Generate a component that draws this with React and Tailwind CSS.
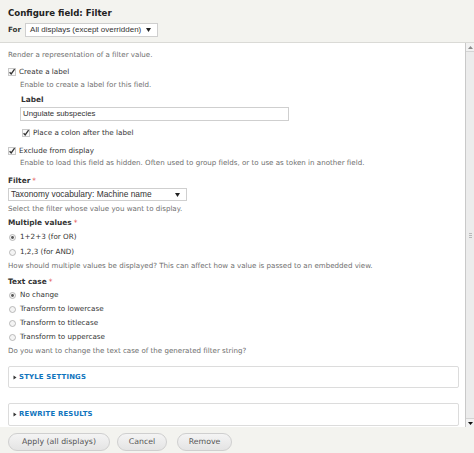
import React from "react";

const sans = { fontFamily: '"DejaVu Sans", Verdana, sans-serif' };
const arial = { fontFamily: '"Liberation Sans", Arial, sans-serif' };

function Check() {
  return (
    <svg width="8" height="8" viewBox="0 0 8 8" className="shrink-0">
      <rect x="0.5" y="0.5" width="7" height="7" fill="#fafafa" stroke="#c8c8c8" />
      <path d="M1.6 4.2 L3.2 6 L6.6 1.2" fill="none" stroke="#333" strokeWidth="1.3" />
    </svg>
  );
}

function Radio({ on }) {
  return (
    <svg width="7" height="7" viewBox="0 0 7 7" className="shrink-0">
      <circle cx="3.5" cy="3.5" r="3" fill="#f4f4f4" stroke="#aaa" strokeWidth="0.8" />
      {on && <circle cx="3.5" cy="3.5" r="1.4" fill="#555" />}
    </svg>
  );
}

function Caret() {
  return (
    <svg width="5" height="4" viewBox="0 0 5 4" className="shrink-0">
      <path d="M0 0 H5 L2.5 4 Z" fill="#222" />
    </svg>
  );
}

function Req() {
  return <span className="text-[#e0403a] font-normal ml-[2px]">*</span>;
}

function Desc({ children, className = "" }) {
  return (
    <div className={"h-[12px] flex items-center text-[7.1px] text-[#6e6e6e] whitespace-nowrap " + className}>
      {children}
    </div>
  );
}

function Heading({ children, className = "" }) {
  return (
    <div className={"h-[12px] flex items-center text-[7.4px] font-bold text-[#333] whitespace-nowrap " + className}>
      {children}
    </div>
  );
}

function CheckRow({ children, className = "" }) {
  return (
    <div className={"h-[12px] flex items-center gap-[3px] text-[7.2px] text-[#333] whitespace-nowrap " + className}>
      <Check />
      <span>{children}</span>
    </div>
  );
}

function RadioRow({ on, children, className = "" }) {
  return (
    <div className={"h-[12px] flex items-center gap-[4px] pl-[1px] text-[7.2px] text-[#333] whitespace-nowrap " + className}>
      <Radio on={on} />
      <span>{children}</span>
    </div>
  );
}

function Fieldset({ label, className = "" }) {
  return (
    <div className={"mr-[6px] border border-[#dcdcdc] rounded-[2px] flex items-center pl-[4px] gap-[2px] " + className}>
      <svg width="4" height="5" viewBox="0 0 4 5" className="shrink-0">
        <path d="M0.5 0.5 L3.5 2.5 L0.5 4.5 Z" fill="#333" />
      </svg>
      <span className="text-[6.9px] font-bold text-[#0f74bd] tracking-[0.2px]">{label}</span>
    </div>
  );
}

function Button({ children, className = "" }) {
  return (
    <div
      className={
        "h-[18px] rounded-full border border-[#cfcfcf] bg-gradient-to-b from-[#f4f4f4] to-[#e4e4e4] flex items-center justify-center text-[7.8px] text-[#555] " +
        className
      }
    >
      {children}
    </div>
  );
}

export default function App() {
  return (
    <div className="w-[474px] h-[453px] bg-white flex flex-col overflow-hidden" style={sans}>
      {/* header */}
      <div className="h-[43px] shrink-0 bg-[#f3f3ef] border-b border-[#dadad6] px-[8px] pt-[7px]">
        <div className="h-[13px] flex items-center text-[8.6px] font-bold text-[#222]">Configure field: Filter</div>
        <div className="mt-[3px] flex items-center gap-[4px]">
          <span className="text-[7.2px] font-bold text-[#333]">For</span>
          <div
            className="w-[133px] h-[14px] bg-white border border-[#cfcfcf] flex items-center justify-between pl-[4px] pr-[6px] text-[8px] text-[#333]"
            style={arial}
          >
            <span>All displays (except overridden)</span>
            <Caret />
          </div>
        </div>
      </div>

      {/* body */}
      <div className="flex-1 flex min-h-0">
        <div className="flex-1 pl-[8px] flex flex-col">
          <Desc className="mt-[6px]">Render a representation of a filter value.</Desc>
          <CheckRow className="mt-[5px]">Create a label</CheckRow>
          <Desc className="mt-[1px] pl-[12px]">Enable to create a label for this field.</Desc>
          <Heading className="mt-[3px] pl-[13px]">Label</Heading>
          <div className="ml-[12px] mt-[1px] w-[269px] h-[14px] border border-[#cfcfcf] flex items-center pl-[2px] text-[7.8px] text-[#333]" style={arial}>
            Ungulate subspecies
          </div>
          <CheckRow className="mt-[6px] pl-[14px]">Place a colon after the label</CheckRow>
          <CheckRow className="mt-[6px]">Exclude from display</CheckRow>
          <Desc className="pl-[12px]">
            Enable to load this field as hidden. Often used to group fields, or to use as token in another field.
          </Desc>
          <Heading className="mt-[6px]">
            Filter<Req />
          </Heading>
          <div
            className="mt-[1px] w-[179px] h-[13px] border border-[#cfcfcf] bg-white flex items-center justify-between pl-[2px] pr-[6px] text-[8.4px] text-[#333]"
            style={arial}
          >
            <span>Taxonomy vocabulary: Machine name</span>
            <Caret />
          </div>
          <Desc className="mt-[2px]">Select the filter whose value you want to display.</Desc>
          <Heading className="mt-[2px]">
            Multiple values<Req />
          </Heading>
          <RadioRow on className="mt-[2px]">1+2+3 (for OR)</RadioRow>
          <RadioRow className="mt-[3px]">1,2,3 (for AND)</RadioRow>
          <Desc className="mt-[2px]">
            How should multiple values be displayed? This can affect how a value is passed to an embedded view.
          </Desc>
          <Heading className="mt-[4px]">
            Text case<Req />
          </Heading>
          <RadioRow on className="mt-[1px]">No change</RadioRow>
          <RadioRow className="mt-[2px]">Transform to lowercase</RadioRow>
          <RadioRow className="mt-[2px]">Transform to titlecase</RadioRow>
          <RadioRow className="mt-[2px]">Transform to uppercase</RadioRow>
          <Desc className="mt-[2px]">Do you want to change the text case of the generated filter string?</Desc>
          <Fieldset label="STYLE SETTINGS" className="mt-[9px] h-[22px]" />
          <Fieldset label="REWRITE RESULTS" className="mt-[15px] h-[23px]" />
        </div>
        {/* scrollbar */}
        <div className="w-[9px] shrink-0 bg-[#ececec] border-l border-[#c9c9c9] flex flex-col">
          <div className="h-[9px] bg-[#f2f2f2] border-b border-[#d4d4d4] flex items-center justify-center">
            <svg width="5" height="3" viewBox="0 0 5 3"><path d="M0 3 L2.5 0 L5 3 Z" fill="#8a8a8a" /></svg>
          </div>
          <div className="flex-1 flex items-center justify-center">
            <div className="w-[3px] flex flex-col gap-[1px]">
              <div className="h-px bg-[#b8b8b8]" />
              <div className="h-px bg-[#b8b8b8]" />
              <div className="h-px bg-[#b8b8b8]" />
            </div>
          </div>
          <div className="h-[9px] bg-[#f2f2f2] border-t border-[#d4d4d4] flex items-center justify-center">
            <svg width="5" height="3" viewBox="0 0 5 3"><path d="M0 0 L5 0 L2.5 3 Z" fill="#111" /></svg>
          </div>
        </div>
      </div>

      {/* footer */}
      <div className="h-[26px] shrink-0 bg-[#f3f3ef] flex items-start pt-[6px] pl-[8px]">
        <Button className="w-[102px]">Apply (all displays)</Button>
        <Button className="w-[50px] ml-[7px]">Cancel</Button>
        <Button className="w-[55px] ml-[10px]">Remove</Button>
      </div>
    </div>
  );
}
